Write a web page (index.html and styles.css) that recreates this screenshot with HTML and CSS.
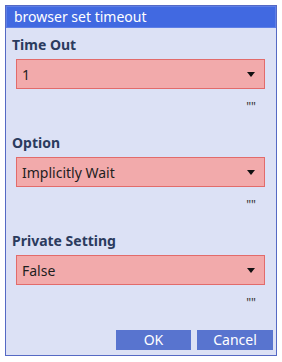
FILE: index.html
```html
<!DOCTYPE html>
<html lang="en">
  <head>
    <meta charset="UTF-8" />
    <meta name="viewport" content="width=device-width, initial-scale=1.0" />
    <title>browser set timeout</title>
    <link rel="stylesheet" href="styles.css">
  </head>
  <body>
    <div class="dialog">
      <div class="title-bar">browser set timeout</div>
      <div class="content">
        <div class="field">
          <label class="field-label">Time Out</label>
          <div class="select-box">
            <span class="select-value">1</span>
            <span class="arrow"></span>
          </div>
          <div class="hint">""</div>
        </div>
        <div class="field">
          <label class="field-label">Option</label>
          <div class="select-box">
            <span class="select-value">Implicitly Wait</span>
            <span class="arrow"></span>
          </div>
          <div class="hint">""</div>
        </div>
        <div class="field">
          <label class="field-label">Private Setting</label>
          <div class="select-box">
            <span class="select-value">False</span>
            <span class="arrow"></span>
          </div>
          <div class="hint">""</div>
        </div>
      </div>
      <div class="buttons">
        <button class="btn btn-ok">OK</button>
        <button class="btn btn-cancel">Cancel</button>
      </div>
    </div>
  </body>
</html>
```

FILE: styles.css
```css
body {
  margin: 0;
  background-color: #ffffff;
  font-family: "Noto Sans", "Open Sans", sans-serif;
}

.dialog {
  margin: 5px;
  width: 270px;
  height: 349px;
  border: 1px solid #5569c4;
  background-color: #dce1f5;
  display: flex;
  flex-direction: column;
}

.title-bar {
  height: 20px;
  line-height: 20px;
  background-color: #4169e1;
  border: 1px solid #5e7fe6;
  color: #ffffff;
  font-size: 14px;
  padding-left: 7px;
}

.content {
  flex: 1;
  padding: 8px 0 0 6px;
}

.field {
  margin-bottom: 21px;
}

.field-label {
  display: block;
  height: 18px;
  line-height: 18px;
  font-size: 14px;
  font-weight: bold;
  color: #2b3b5e;
}

.select-box {
  margin: 5px 0 0 4px;
  width: 233px;
  height: 28px;
  border: 1px solid #e26b6b;
  background-color: #f2aaab;
  display: flex;
  align-items: center;
  justify-content: space-between;
  padding: 0 9px 0 5px;
}

.select-value {
  font-size: 14px;
  color: #1e1e1e;
}

.arrow {
  width: 0;
  height: 0;
  border-left: 4px solid transparent;
  border-right: 4px solid transparent;
  border-top: 5px solid #111111;
}

.hint {
  margin-top: 12px;
  height: 12px;
  line-height: 12px;
  font-size: 12px;
  color: #333333;
  text-align: right;
  padding-right: 20px;
}

.buttons {
  display: flex;
  justify-content: flex-end;
  gap: 6px;
  padding: 0 3px 8px 0;
}

.btn {
  height: 20px;
  border: none;
  background-color: #5874cf;
  color: #ffffff;
  font-family: "Noto Sans", "Open Sans", sans-serif;
  font-size: 14px;
  line-height: 20px;
  padding: 0;
}

.btn-ok {
  width: 75px;
}

.btn-cancel {
  width: 76px;
}
```
